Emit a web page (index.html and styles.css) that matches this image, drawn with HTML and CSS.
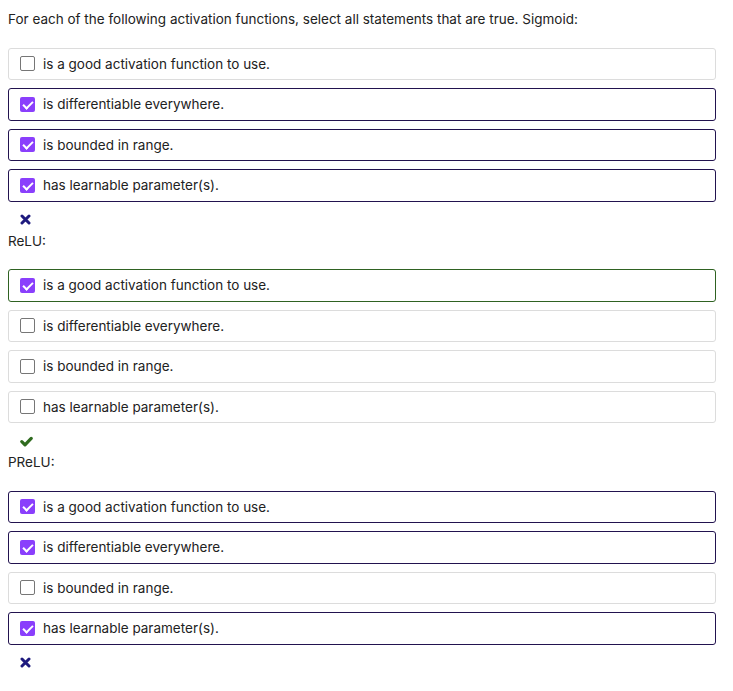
FILE: index.html
```html
<!DOCTYPE html>
<html lang="en">
<head>
  <meta charset="UTF-8">
  <title>Activation functions</title>
  <link rel="stylesheet" href="styles.css">
</head>
<body>

  <p class="question">For each of the following activation functions, select all statements that are true. Sigmoid:</p>

  <div class="options">
    <label class="option"><span class="box"></span>is a good activation function to use.</label>
    <label class="option selected"><span class="box checked"></span>is differentiable everywhere.</label>
    <label class="option selected"><span class="box checked"></span>is bounded in range.</label>
    <label class="option selected"><span class="box checked"></span>has learnable parameter(s).</label>
  </div>
  <div class="mark">
    <svg width="11" height="11" viewBox="0 0 11 11"><path d="M2 2 L9 9 M9 2 L2 9" stroke="#1e1a7e" stroke-width="3" stroke-linecap="round"/></svg>
  </div>

  <p class="question">ReLU:</p>

  <div class="options">
    <label class="option correct"><span class="box checked"></span>is a good activation function to use.</label>
    <label class="option"><span class="box"></span>is differentiable everywhere.</label>
    <label class="option"><span class="box"></span>is bounded in range.</label>
    <label class="option"><span class="box"></span>has learnable parameter(s).</label>
  </div>
  <div class="mark">
    <svg width="13" height="11" viewBox="0 0 13 11"><path d="M1.8 5.6 L5 8.8 L11.2 2.4" fill="none" stroke="#2f6b1f" stroke-width="3.2" stroke-linecap="round" stroke-linejoin="round"/></svg>
  </div>

  <p class="question">PReLU:</p>

  <div class="options">
    <label class="option selected"><span class="box checked"></span>is a good activation function to use.</label>
    <label class="option selected"><span class="box checked"></span>is differentiable everywhere.</label>
    <label class="option"><span class="box"></span>is bounded in range.</label>
    <label class="option selected"><span class="box checked"></span>has learnable parameter(s).</label>
  </div>
  <div class="mark">
    <svg width="11" height="11" viewBox="0 0 11 11"><path d="M2 2 L9 9 M9 2 L2 9" stroke="#1e1a7e" stroke-width="3" stroke-linecap="round"/></svg>
  </div>

</body>
</html>
```

FILE: styles.css
```css
body {
  font-family: Inter, "Noto Sans", Arial, sans-serif;
  font-size: 13.5px;
  color: #222;
  margin: 8px 17px 8px 8px;
}

.question {
  margin: 0;
  padding-top: 1px;
  line-height: 20px;
}

.options {
  margin-top: 18.5px;
}

.option {
  display: flex;
  align-items: center;
  height: 30.5px;
  margin-bottom: 8px;
  padding: 0 11px;
  border: 1px solid #dcdcdc;
  border-radius: 3px;
  background-color: #fff;
}

.option.selected {
  border-color: #22134f;
}

.option.correct {
  border-color: #2f6222;
}

.box {
  width: 13px;
  height: 13px;
  margin-right: 8px;
  border: 1px solid #767676;
  border-radius: 2px;
  flex-shrink: 0;
  position: relative;
}

.box.checked {
  width: 15px;
  height: 15px;
  border: none;
  background-color: #8a3ffc;
}

.box.checked::after {
  content: "";
  position: absolute;
  left: 5px;
  top: 2px;
  width: 4px;
  height: 8px;
  border: solid #fff;
  border-width: 0 2.5px 2.5px 0;
  transform: rotate(45deg);
}

.mark {
  display: flex;
  align-items: center;
  height: 20px;
  padding-left: 12px;
  margin-top: 1.5px;
}
```
